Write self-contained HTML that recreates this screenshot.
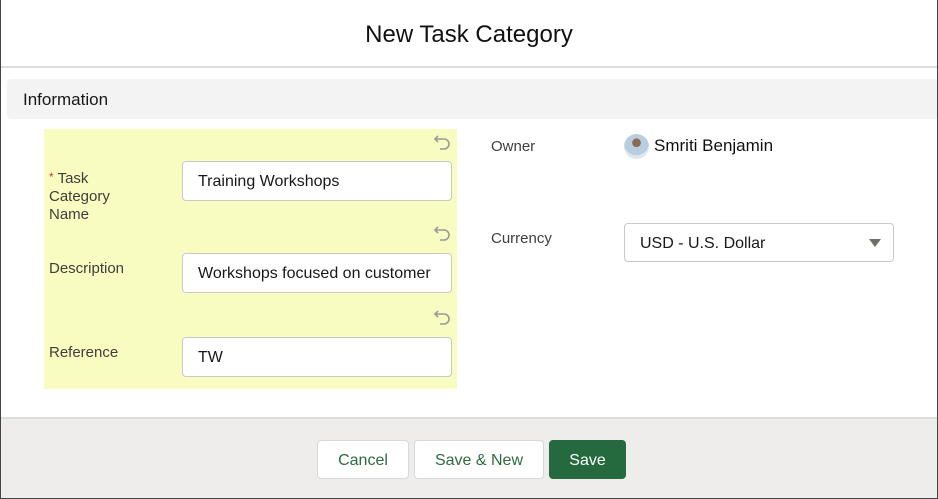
<!DOCTYPE html>
<html><head><style>
*{box-sizing:border-box;margin:0;padding:0}
body{width:938px;height:499px;position:relative;font-family:"Liberation Sans",Arial,sans-serif;background:#fff;overflow:hidden;color:#181818}
.a{position:absolute}
.frame{left:0;top:0;width:938px;height:499px;border:1px solid #444;border-top:none}
.inp{position:absolute;background:#fff;border:1px solid #c9c9c9;border-radius:4px;font-size:16px;padding:1px 20px 0 15px;line-height:38px;height:40px;overflow:hidden;white-space:nowrap;text-overflow:clip}
.inp span{display:block;overflow:hidden}
.lbl{position:absolute;font-size:15px;color:#3e3e3c;line-height:18px}
.undo{position:absolute;width:18px;height:18px}
.btn{position:absolute;top:440px;height:39px;border:1px solid #d8d8d8;border-radius:4px;background:#fff;color:#2e6b3f;font-size:16px;text-align:center;line-height:39px}
</style></head><body>
<div class="a" style="left:0;top:0;width:938px;height:68px;border-bottom:2px solid #ddd"></div>
<div class="a" style="left:0;top:21px;width:938px;text-align:center;font-size:24px;color:#111">New Task Category</div>
<div class="a" style="left:7px;top:79px;width:931px;height:40px;background:#f3f3f3;border-radius:4px"></div>
<div class="a" style="left:23px;top:90px;font-size:17px;color:#181818">Information</div>
<div class="a" style="left:44px;top:129px;width:413px;height:260px;background:#f9fcc0"></div>

<svg class="undo" style="left:433px;top:133px" viewBox="0 0 18 18"><path d="M5 3 L2 6 L5 9 M2 6 H11 A5 5 0 0 1 11 16 H7" fill="none" stroke="#9a9a9a" stroke-width="1.6"/></svg>
<svg class="undo" style="left:433px;top:224px" viewBox="0 0 18 18"><path d="M5 3 L2 6 L5 9 M2 6 H11 A5 5 0 0 1 11 16 H7" fill="none" stroke="#9a9a9a" stroke-width="1.6"/></svg>
<svg class="undo" style="left:433px;top:308px" viewBox="0 0 18 18"><path d="M5 3 L2 6 L5 9 M2 6 H11 A5 5 0 0 1 11 16 H7" fill="none" stroke="#9a9a9a" stroke-width="1.6"/></svg>

<div class="lbl" style="left:49px;top:168px"><span style="color:#c23934;font-size:12px;vertical-align:2px">*</span> Task<br>Category<br>Name</div>
<div class="inp" style="left:182px;top:161px;width:270px"><span>Training Workshops</span></div>
<div class="lbl" style="left:49px;top:260px">Description</div>
<div class="inp" style="left:182px;top:253px;width:270px"><span>Workshops focused on customer</span></div>
<div class="lbl" style="left:49px;top:344px">Reference</div>
<div class="inp" style="left:182px;top:337px;width:270px"><span>TW</span></div>

<div class="lbl" style="left:491px;top:138px">Owner</div>
<div class="a" style="left:624px;top:134px;width:25px;height:25px;border-radius:50%;background:radial-gradient(circle at 50% 35%,#8a6a55 0 20%,#b8cde0 22% 60%,#dfe6ee 62%)"></div>
<div class="a" style="left:654px;top:136px;font-size:17px;color:#111">Smriti Benjamin</div>
<div class="lbl" style="left:491px;top:230px">Currency</div>
<div class="inp" style="left:624px;top:223px;width:270px;height:39px">USD - U.S. Dollar</div>
<div class="a" style="left:869px;top:239px;width:0;height:0;border-left:6px solid transparent;border-right:6px solid transparent;border-top:8px solid #706e6b"></div>

<div class="a" style="left:0;top:417px;width:938px;height:82px;background:#eeedeb;border-top:2px solid #ddd"></div>
<div class="btn" style="left:317px;width:92px">Cancel</div>
<div class="btn" style="left:414px;width:130px">Save &amp; New</div>
<div class="btn" style="left:549px;width:77px;background:#246a3e;border-color:#246a3e;color:#fff">Save</div>
<div class="a frame"></div>
</body></html>
